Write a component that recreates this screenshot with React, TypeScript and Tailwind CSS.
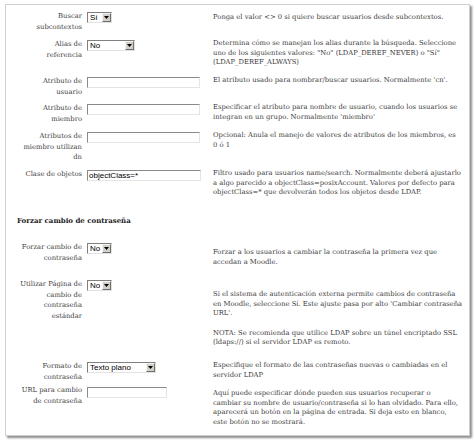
import type { ReactNode } from "react";

const serif = "font-['DejaVu_Serif','Liberation_Serif',serif]";
const sans = "font-['Liberation_Sans',Arial,sans-serif]";

function Select({ value, w }: { value: string; w: string }) {
  return (
    <div
      className={`${w} h-[11px] flex bg-white border border-t-[#808080] border-l-[#808080] border-b-[#e2e2e2] border-r-[#e2e2e2]`}
    >
      <span className={`flex-1 pl-[2px] text-[8px] leading-[9px] text-black ${sans}`}>{value}</span>
      <span className="w-[9px] h-[9px] bg-[#d4d0c8] border border-t-[#f4f4f4] border-l-[#f4f4f4] border-b-[#6e6e6e] border-r-[#6e6e6e] flex items-center justify-center">
        <svg width="5" height="3" viewBox="0 0 5 3">
          <path d="M0 0h5L2.5 3z" fill="#000" />
        </svg>
      </span>
    </div>
  );
}

function TextInput({ w, value = "" }: { w: string; value?: string }) {
  return (
    <div
      className={`${w} h-[11px] bg-white border border-t-[#8a8a8a] border-l-[#8a8a8a] border-b-[#e4e4e4] border-r-[#e4e4e4] pl-[1px] text-[8px] leading-[9px] text-black ${sans}`}
    >
      {value}
    </div>
  );
}

interface Row {
  label: string[];
  control: ReactNode;
  desc: string[][];
  h: string;
  dpt: string;
  cpt?: string;
}

const rows: Row[] = [
  {
    label: ["Buscar", "subcontextos"],
    control: <Select value="Sí" w="w-[25px]" />,
    desc: [["Ponga el valor <> 0 si quiere buscar usuarios desde subcontextos."]],
    h: "h-[28px]",
    dpt: "pt-[2px]",
  },
  {
    label: ["Alias de", "referencia"],
    control: <Select value="No" w="w-[48px]" />,
    desc: [
      [
        "Determina cómo se manejan los alias durante la búsqueda. Seleccione",
        "uno de los siguientes valores: \"No\" (LDAP_DEREF_NEVER) o \"Sí\"",
        "(LDAP_DEREF_ALWAYS)",
      ],
    ],
    h: "h-[37px]",
    dpt: "pt-[0px]",
  },
  {
    label: ["Atributo de", "usuario"],
    control: <TextInput w="w-[113px]" />,
    desc: [["El atributo usado para nombrar/buscar usuarios. Normalmente 'cn'."]],
    h: "h-[27px]",
    dpt: "pt-[0px]",
  },
  {
    label: ["Atributo de", "miembro"],
    control: <TextInput w="w-[113px]" />,
    desc: [
      [
        "Especificar el atributo para nombre de usuario, cuando los usuarios se",
        "integran en un grupo. Normalmente 'miembro'",
      ],
    ],
    h: "h-[28px]",
    dpt: "pt-[0px]",
  },
  {
    label: ["Atributos de", "miembro utilizan", "dn"],
    control: <TextInput w="w-[113px]" />,
    desc: [
      [
        "Opcional: Anula el manejo de valores de atributos de los miembros, es",
        "0 ó 1",
      ],
    ],
    h: "h-[38px]",
    dpt: "pt-[0px]",
  },
  {
    label: ["Clase de objetos"],
    control: <TextInput w="w-[114px]" value="objectClass=*" />,
    desc: [
      [
        "Filtro usado para usuarios name/search. Normalmente deberá ajustarlo",
        "a algo parecido a objectClass=posixAccount. Valores por defecto para",
        "objectClass=* que devolverán todos los objetos desde LDAP.",
      ],
    ],
    h: "h-[46px]",
    dpt: "pt-[0px]",
  },
];

const rows2: Row[] = [
  {
    label: ["Forzar cambio de", "contraseña"],
    control: <Select value="No" w="w-[25px]" />,
    desc: [
      [
        "Forzar a los usuarios a cambiar la contraseña la primera vez que",
        "accedan a Moodle.",
      ],
    ],
    h: "h-[37px]",
    dpt: "pt-[6px]",
  },
  {
    label: ["Utilizar Página de", "cambio de", "contraseña", "estándar"],
    control: <Select value="No" w="w-[25px]" />,
    desc: [
      [
        "Si el sistema de autenticación externa permite cambios de contraseña",
        "en Moodle, seleccione Sí. Este ajuste pasa por alto 'Cambiar contraseña",
        "URL'.",
      ],
      [
        "NOTA: Se recomienda que utilice LDAP sobre un túnel encriptado SSL",
        "(ldaps://) si el servidor LDAP es remoto.",
      ],
    ],
    h: "h-[82px]",
    dpt: "pt-[11px]",
  },
  {
    label: ["Formato de", "contraseña"],
    control: <Select value="Texto plano" w="w-[69px]" />,
    desc: [
      [
        "Especifique el formato de las contraseñas nuevas o cambiadas en el",
        "servidor LDAP",
      ],
    ],
    h: "h-[24px]",
    dpt: "pt-[0px]",
  },
  {
    label: ["URL para cambio", "de contraseña"],
    control: <TextInput w="w-[80px]" />,
    desc: [
      [
        "Aquí puede especificar dónde pueden sus usuarios recuperar o",
        "cambiar su nombre de usuario/contraseña si lo han olvidado. Para ello,",
        "aparecerá un botón en la página de entrada. Si deja esto en blanco,",
        "este botón no se mostrará.",
      ],
    ],
    h: "h-[44px]",
    dpt: "pt-[4px]",
    cpt: "pt-[2px]",
  },
];

function FormRow({ row }: { row: Row }) {
  return (
    <div className={`flex items-start ${row.h}`}>
      <div className="w-[76px] shrink-0 text-right text-[6.8px] leading-[10.5px] text-[#3d3d3d]">
        {row.label.map((l) => (
          <div key={l} className="whitespace-nowrap">
            {l}
          </div>
        ))}
      </div>
      <div className={`w-[131px] shrink-0 pl-[5px] ${row.cpt ?? "pt-[1px]"}`}>{row.control}</div>
      <div className={`flex-1 text-[6.8px] leading-[9.5px] text-[#3d3d3d] ${row.dpt}`}>
        {row.desc.map((p, i) => (
          <div key={i} className={i > 0 ? "mt-[10px]" : ""}>
            {p.map((line) => (
              <div key={line} className="whitespace-nowrap">
                {line}
              </div>
            ))}
          </div>
        ))}
      </div>
    </div>
  );
}

export default function App() {
  return (
    <div className={`w-[474px] h-[443px] bg-white overflow-hidden pt-[4px] pl-[5px] ${serif}`}>
      <div className="w-[465px] h-[432px] bg-white border border-[#cfcfcf] shadow-[2px_2px_2px_rgba(0,0,0,0.45)] pt-[6px] overflow-hidden">
        {rows.map((r) => (
          <FormRow key={r.label.join(" ")} row={r} />
        ))}
        <div className="h-[27px] pl-[11px] text-[7px] leading-[11px] font-bold text-[#222]">
          Forzar cambio de contraseña
        </div>
        {rows2.map((r) => (
          <FormRow key={r.label.join(" ")} row={r} />
        ))}
      </div>
    </div>
  );
}
